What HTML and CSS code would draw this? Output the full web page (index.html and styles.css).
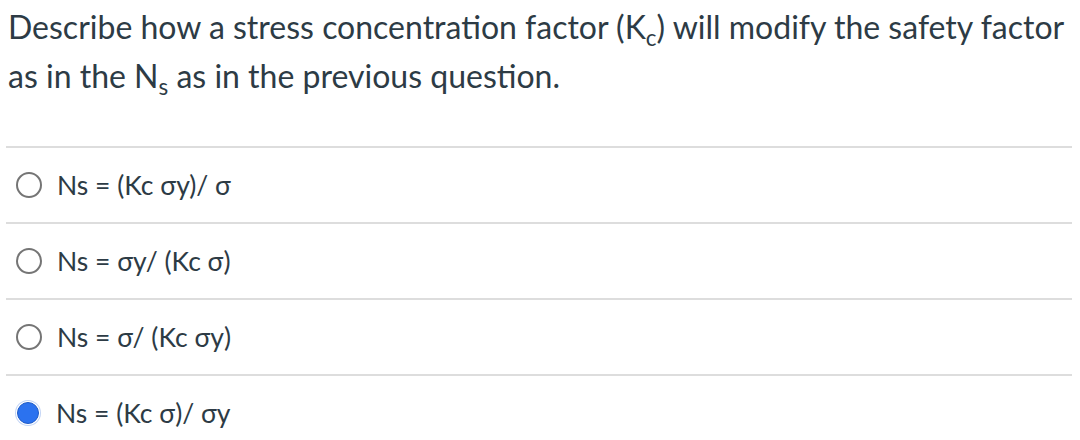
FILE: index.html
```html
<!DOCTYPE html>
<html>
<head>
<meta charset="utf-8">
<link rel="stylesheet" href="styles.css">
</head>
<body>
<div class="question">
  <div class="question-text">Describe how a stress concentration factor (K<sub>c</sub>) will modify the safety factor as in the N<sub>s</sub> as in the previous question.</div>
  <div class="answers">
    <label class="answer"><span class="radio"></span><span class="answer-text">Ns = (Kc σy)/ σ</span></label>
    <label class="answer"><span class="radio"></span><span class="answer-text">Ns = σy/ (Kc σ)</span></label>
    <label class="answer"><span class="radio"></span><span class="answer-text">Ns = σ/ (Kc σy)</span></label>
    <label class="answer"><span class="radio checked"></span><span class="answer-text">Ns = (Kc σ)/ σy</span></label>
  </div>
</div>
</body>
</html>
```

FILE: styles.css
```css
html, body {
  margin: 0;
  padding: 0;
  background: #ffffff;
}
body {
  font-family: Lato, "Open Sans", sans-serif;
  color: #2d3b45;
}
.question {
  width: 1066px;
  padding-left: 6px;
}
.question-text {
  font-size: 32px;
  line-height: 49px;
  padding: 2px 0 0 2px;
  height: 146px;
  box-sizing: border-box;
}
.question-text sub {
  font-size: 0.7em;
  line-height: 0;
  vertical-align: -0.3em;
}
.answers {
  border-top: 2px solid #dddddd;
}
.answer {
  display: flex;
  align-items: center;
  height: 74px;
  border-bottom: 2px solid #dddddd;
  padding-left: 10px;
}
.answer:last-child {
  border-bottom: none;
}
.radio {
  width: 22px;
  height: 22px;
  border: 2px solid #757575;
  border-radius: 50%;
  flex: none;
}
.radio.checked {
  width: 20px;
  height: 20px;
  margin: 0 2px 0 1px;
  background: #2b72ef;
  border: 1px solid #1f5bc6;
  box-shadow: 0 0 0 1px #ffffff, 0 0 0 2px #c3d5f6;
}
.answer-text {
  margin-left: 15px;
  font-size: 26.5px;
}
```
